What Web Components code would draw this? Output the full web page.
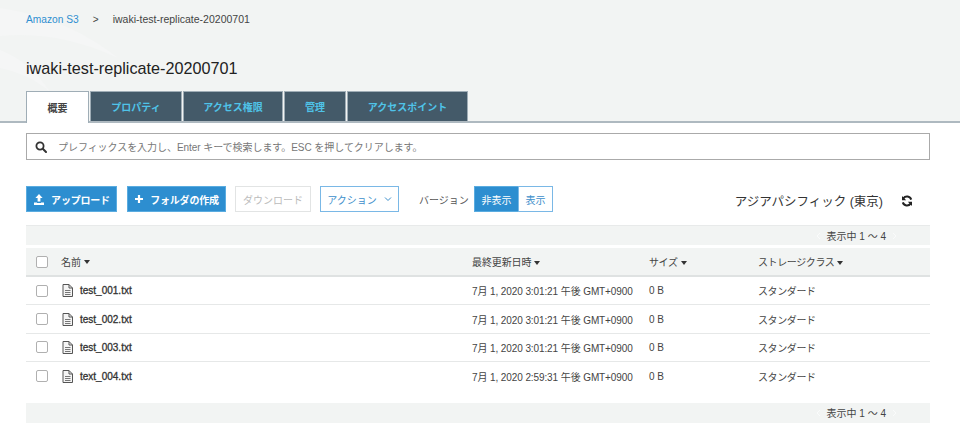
<!DOCTYPE html>
<html lang="ja">
<head>
<meta charset="utf-8">
<title>iwaki-test-replicate-20200701</title>
<style>
  html, body { margin: 0; padding: 0; background: #fff; overflow: hidden; }
  body { font-family: "Liberation Sans", "Noto Sans CJK JP", sans-serif; color: #444; width: 960px; height: 431px; }
</style>
</head>
<body>
<s3-header bucket="iwaki-test-replicate-20200701"></s3-header>
<s3-search placeholder="プレフィックスを入力し、Enter キーで検索します。ESC を押してクリアします。"></s3-search>
<s3-toolbar></s3-toolbar>
<s3-pager></s3-pager>
<s3-table-head></s3-table-head>
<s3-row name="test_001.txt" date="7月 1, 2020 3:01:21 午後 GMT+0900"></s3-row>
<s3-row name="test_002.txt" date="7月 1, 2020 3:01:21 午後 GMT+0900"></s3-row>
<s3-row name="test_003.txt" date="7月 1, 2020 3:01:21 午後 GMT+0900"></s3-row>
<s3-row name="text_004.txt" date="7月 1, 2020 2:59:31 午後 GMT+0900" last></s3-row>
<s3-pager bottom></s3-pager>

<template id="s3-header-tmpl">
  <style>
    :host { display: block; position: relative; height: 121px; background: #f2f4f3; border-bottom: 2px solid #aeb9c0; box-sizing: content-box; overflow: visible; }
    .swoosh { position: absolute; left: 0; top: 0; width: 120px; height: 121px; }
    .inner { position: relative; padding: 0 26px; display: flex; flex-direction: column; }
    .crumbs { height: 38px; display: flex; align-items: center; font-size: 10.5px; color: #444; }
    .crumbs a { color: #2f8fd0; text-decoration: none; font-size: 10.2px; }
    .crumbs .sep { width: 34px; text-align: center; font-size: 10px; }
    h1 { margin: 18px 0 0; height: 24px; line-height: 24px; font-size: 16.2px; font-weight: 400; color: #222; }
    .tabs { display: flex; margin-top: 11px; gap: 1px; height: 30px; }
    .tab { display: flex; align-items: center; justify-content: center; box-sizing: border-box; height: 30px; font-size: 10px; font-weight: 700; background: #445a69; color: #4fc3e8; border: 1px solid #9fadb6; border-bottom: 0; }
    .tab.active { background: #fff; color: #444; height: 32px; position: relative; z-index: 1; }
  </style>
  <svg class="swoosh" viewBox="0 0 120 121" aria-hidden="true">
    <path d="M0 8C40 14 80 28 118 58C80 40 40 32 0 36Z" fill="#f5f6f6"/>
    <path d="M0 50C20 58 36 70 50 92C34 78 18 72 0 68Z" fill="#f5f6f6"/>
  </svg>
  <div class="inner">
    <div class="crumbs"><a href="#">Amazon S3</a><span class="sep">&gt;</span><span class="cur"></span></div>
    <h1></h1>
    <div class="tabs">
      <div class="tab active" style="width:63px">概要</div>
      <div class="tab" style="width:92px">プロパティ</div>
      <div class="tab" style="width:100px">アクセス権限</div>
      <div class="tab" style="width:62px">管理</div>
      <div class="tab" style="width:121px">アクセスポイント</div>
    </div>
  </div>
</template>

<template id="s3-search-tmpl">
  <style>
    :host { display: flex; align-items: center; box-sizing: border-box; height: 27px; margin: 10px 30px 0 26px; border: 1px solid #aaa; background: #fff; font-size: 10px; letter-spacing: -.05px; color: #777; }
    svg { width: 12px; height: 12px; margin: 0 11px 0 8px; }
  </style>
  <svg viewBox="0 0 12 12"><circle cx="5" cy="5" r="3.6" fill="none" stroke="#333" stroke-width="1.8"/><path d="M7.8 7.8L11 11" stroke="#333" stroke-width="2" stroke-linecap="round"/></svg>
  <span class="ph"></span>
</template>

<template id="s3-button-tmpl">
  <style>
    :host { display: inline-flex; align-items: center; justify-content: center; box-sizing: border-box; height: 26px; font-size: 10px; border: 1px solid #5aace0; white-space: nowrap; }
    :host([kind=primary]) { background: #2d8ed0; color: #fff; font-weight: 700; }
    :host([kind=outline]) { background: #fff; color: #3d8fcb; border-color: #7ab8e6; }
    :host([kind=disabled]) { background: #fff; color: #bbb; border: 1px solid #e2e4e4; }
    ::slotted(svg) { flex: none; }
  </style>
  <slot></slot>
</template>

<template id="s3-toolbar-tmpl">
  <style>
    :host { display: flex; align-items: center; height: 26px; margin: 26px 30px 0 26px; font-size: 10px; }
    .ver { margin-left: 20px; width: 55px; color: #555; white-space: nowrap; }
    .region { margin-left: auto; font-size: 12.5px; color: #333; white-space: nowrap; margin-right: 18px; position: relative; top: 1px; }
    .refresh { width: 12px; height: 12px; margin-right: 17px; position: relative; top: 2px; }
    .b { margin-right: 10px; }
    .b2 { margin-right: 9px; }
    svg.i { margin-right: 6px; }
    .tight { letter-spacing: -.2px; }
  </style>
  <s3-button kind="primary" class="b" style="width:91px"><svg class="i" width="12" height="11" viewBox="0 0 12 11"><path d="M6 0L9.6 4H7.4V7.5H4.6V4H2.4ZM1 8.5H4V9H8V8.5H11V11H1Z" fill="#fff"/></svg><span class="tight">アップロード</span></s3-button>
  <s3-button kind="primary" class="b2" style="width:99px"><svg class="i" width="10" height="10" viewBox="0 0 10 10"><path d="M5 1V9M1 5H9" stroke="#fff" stroke-width="2.2"/></svg><span class="tight">フォルダの作成</span></s3-button>
  <s3-button kind="disabled" class="b2" style="width:76px">ダウンロード</s3-button>
  <s3-button kind="outline" style="width:79px">アクション<svg width="8" height="6" viewBox="0 0 8 6" style="margin-left:7px"><path d="M1 1.5L4 4.5L7 1.5" fill="none" stroke="#3d8fcb" stroke-width="1"/></svg></s3-button>
  <span class="ver">バージョン</span>
  <s3-button kind="primary" style="width:45px;font-weight:400">非表示</s3-button>
  <s3-button kind="outline" style="width:35px;margin-left:-1px">表示</s3-button>
  <span class="region">アジアパシフィック (東京)</span>
  <svg class="refresh" viewBox="0 0 12 12"><path d="M10.2 4.6A4.4 4.4 0 0 0 2.4 3.4" fill="none" stroke="#222" stroke-width="2"/><path d="M1.8 7.4A4.4 4.4 0 0 0 9.6 8.6" fill="none" stroke="#222" stroke-width="2"/><path d="M1 1V5.2H5.2ZM11 11V6.8H6.8Z" fill="#222"/></svg>
</template>

<template id="s3-pager-tmpl">
  <style>
    :host { display: flex; align-items: center; justify-content: flex-end; gap: 6px; box-sizing: border-box; height: 20px; margin: 13px 30px 0 26px; padding-right: 33px; background: #f2f4f3; border-top: 1px solid #e8eaea; font-size: 10px; color: #444; }
    :host([bottom]) { margin-top: 12px; border-top: 0; }
    span { white-space: nowrap; }
    svg { flex: none; }
  </style>
  <svg width="5" height="8" viewBox="0 0 5 8"><path d="M4 1L1 4L4 7" fill="none" stroke="#fafbfb" stroke-width="1"/></svg>
  <span>表示中 1 〜 4</span>
  <svg width="5" height="8" viewBox="0 0 5 8"><path d="M1 1L4 4L1 7" fill="none" stroke="#fafbfb" stroke-width="1"/></svg>
</template>

<template id="s3-grid-tmpl">
  <style>
    :host { display: grid; grid-template-columns: 35px 411px 177px 109px 1fr; align-items: center; box-sizing: border-box; margin: 0 30px 0 26px; height: 28.4px; font-size: 10px; color: #444; border-bottom: 1px solid #e6e8e8; }
    :host([head]) { height: 29px; margin-top: 3px; background: #f2f4f3; border-bottom: 2px solid #dfe2e2; }
    :host([last]) { border-bottom: 0; }
    .box { width: 12px; height: 12px; margin-left: 10px; box-sizing: border-box; border: 1px solid #b0b0b0; border-radius: 2px; background: #fff; }
    .name { display: flex; align-items: center; }
    .name svg { margin: 0 7px 0 1px; }
    .date { letter-spacing: -.1px; }
    .cls { letter-spacing: -.4px; }
    :host([head]) .size { letter-spacing: -.4px; }
    :host([head]) .cls { letter-spacing: -.4px; }
    .sort { display: inline-block; margin-left: 3px; vertical-align: 1px; border: 3.5px solid transparent; border-top: 4px solid #333; border-bottom: 0; }
    .name-text { color: #333; -webkit-text-stroke: .3px #333; }
  </style>
  <div class="box"></div>
  <div class="name"></div>
  <div class="date"></div>
  <div class="size"></div>
  <div class="cls"></div>
</template>

<script>
  // small helper, every element clones its own template
  const stamp = (el, id) => {
    const root = el.attachShadow({mode: 'open'});
    root.appendChild(document.querySelector('#' + id).content.cloneNode(true));
    return root;
  };

  customElements.define('s3-header', class extends HTMLElement {
    constructor() { super(); this.root = stamp(this, 's3-header-tmpl'); }
    connectedCallback() {
      const bucket = this.getAttribute('bucket');
      this.root.querySelector('.cur').textContent = bucket;
      this.root.querySelector('h1').textContent = bucket;
    }
  });

  customElements.define('s3-search', class extends HTMLElement {
    constructor() { super(); this.root = stamp(this, 's3-search-tmpl'); }
    connectedCallback() { this.root.querySelector('.ph').textContent = this.getAttribute('placeholder'); }
  });

  customElements.define('s3-button', class extends HTMLElement {
    constructor() { super(); stamp(this, 's3-button-tmpl'); }
  });

  customElements.define('s3-toolbar', class extends HTMLElement {
    constructor() { super(); stamp(this, 's3-toolbar-tmpl'); }
  });

  customElements.define('s3-pager', class extends HTMLElement {
    constructor() { super(); stamp(this, 's3-pager-tmpl'); }
  });

  const sorted = label => `<span>${label}</span><span class="sort"></span>`;
  const fileIcon = `<svg width="11" height="13" viewBox="0 0 11 13"><path d="M1 .5H7L10.5 4V12.5H1Z" fill="#f4f4f4" stroke="#555"/><path d="M7 .5V4H10.5" fill="none" stroke="#555"/><path d="M3 6.5H8.5M3 8.5H8.5M3 10.5H8.5" stroke="#777"/></svg>`;

  customElements.define('s3-table-head', class extends HTMLElement {
    constructor() { super(); this.root = stamp(this, 's3-grid-tmpl'); }
    connectedCallback() {
      this.setAttribute('head', '');
      this.root.querySelector('.name').innerHTML = sorted('名前');
      this.root.querySelector('.date').innerHTML = sorted('最終更新日時');
      this.root.querySelector('.size').innerHTML = sorted('サイズ');
      this.root.querySelector('.cls').innerHTML = sorted('ストレージクラス');
    }
  });

  customElements.define('s3-row', class extends HTMLElement {
    constructor() { super(); this.root = stamp(this, 's3-grid-tmpl'); }
    connectedCallback() {
      this.root.querySelector('.name').innerHTML = fileIcon + `<span class="name-text">${this.getAttribute('name')}</span>`;
      this.root.querySelector('.date').textContent = this.getAttribute('date');
      this.root.querySelector('.size').textContent = '0 B';
      this.root.querySelector('.cls').textContent = 'スタンダード';
    }
  });
</script>
</body>
</html>
